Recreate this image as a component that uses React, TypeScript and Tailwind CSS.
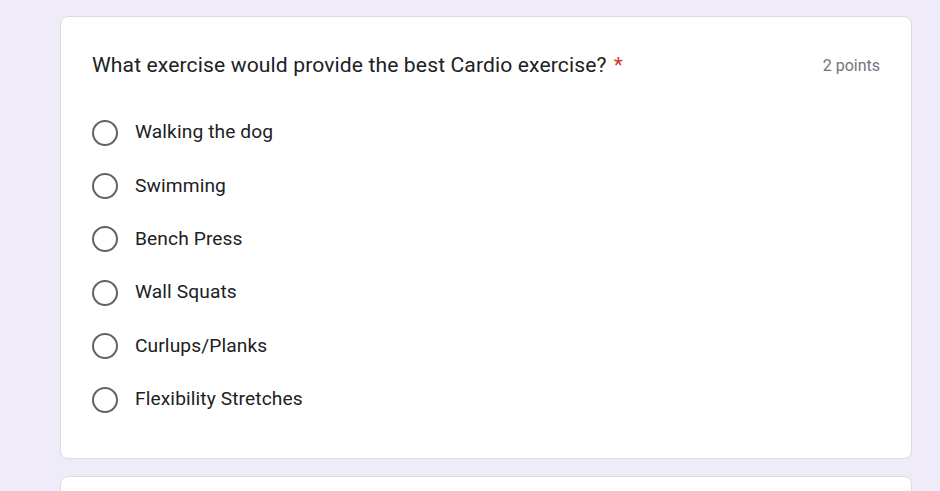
import React from "react";

const options = [
  "Walking the dog",
  "Swimming",
  "Bench Press",
  "Wall Squats",
  "Curlups/Planks",
  "Flexibility Stretches",
];

export default function App() {
  return (
    <div
      className="h-[491px] w-[940px] bg-[#f0ebf8] pt-4 pl-[60px] pr-[28px] overflow-hidden"
      style={{ fontFamily: "Roboto, 'Liberation Sans', sans-serif" }}
    >
      <div className="h-[443px] rounded-lg border border-[#dadce0] bg-white px-[31px] pt-[34px]">
        <div className="flex items-start justify-between">
          <div className="text-[21.1px] leading-[28px] text-[#202124] tracking-[0.12px]">
            What exercise would provide the best Cardio exercise?
            <span className="ml-[7px] text-[#d93025]">*</span>
          </div>
          <div className="pt-[3px] text-[16px] leading-[24px] text-[#70757a]">2 points</div>
        </div>
        <div className="mt-[27px] flex flex-col">
          {options.map((o) => (
            <label key={o} className="flex h-[53.4px] items-center">
              <span className="box-border h-[26px] w-[26px] rounded-full border-[2.5px] border-[#5f6368]" />
              <span className="ml-[17px] text-[19.2px] text-[#202124] tracking-[0.1px]">{o}</span>
            </label>
          ))}
        </div>
      </div>
      <div className="mt-[17px] h-[40px] rounded-lg border border-[#dadce0] bg-white" />
    </div>
  );
}
